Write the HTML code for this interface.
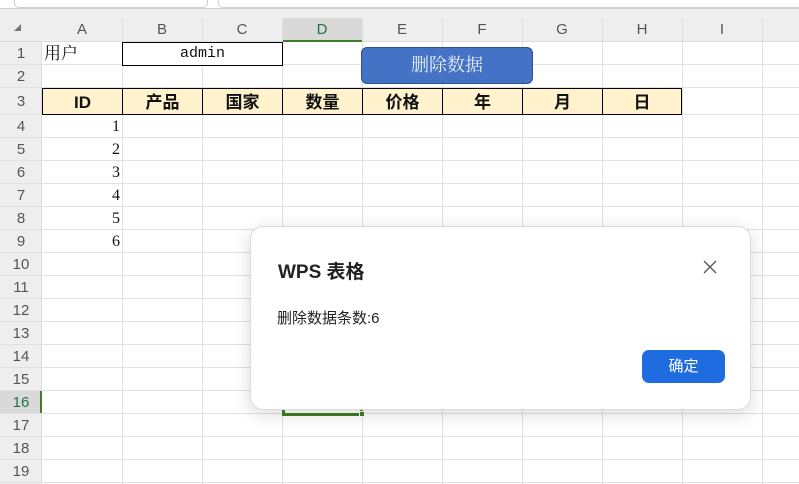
<!DOCTYPE html>
<html><head><meta charset="utf-8">
<style>
*{margin:0;padding:0;box-sizing:border-box}
body{width:799px;height:484px;overflow:hidden;background:#fff;position:relative;font-family:"Liberation Sans","Noto Sans CJK SC",sans-serif}
.a{position:absolute}
.vl{position:absolute;width:1px;background:#e1e1e1}
.hl{position:absolute;height:1px;background:#e1e1e1}
.ch{position:absolute;top:18px;height:24px;line-height:24px;text-align:center;font-size:15px;color:#555}
.rh{position:absolute;left:0;width:42px;text-align:center;font-size:15px;color:#555}
.hd{position:absolute;top:88px;height:27px;line-height:27px;text-align:center;font-weight:bold;font-size:17px;color:#111;background:#fff2cc;border:1px solid #000;margin-left:-1px}
.num{position:absolute;left:42px;width:78px;text-align:right;font-family:"Liberation Serif","Noto Serif CJK SC",serif;font-size:16px;color:#111}
</style></head><body>
<div class="a" style="left:0;top:0;width:799px;height:18px;background:#f0f0f0"></div>
<div class="a" style="left:0;top:0;width:799px;height:9px;background:#fff;border-bottom:1px solid #d0d0d0"></div>
<div class="a" style="left:14px;top:-6px;width:194px;height:14px;background:#fff;border:1px solid #cfcfcf;border-radius:5px"></div>
<div class="a" style="left:218px;top:-6px;width:600px;height:14px;background:#fff;border:1px solid #cfcfcf;border-radius:5px"></div>
<div class="a" style="left:0;top:18px;width:799px;height:24px;background:#eeeeee;border-bottom:1px solid #dcdcdc"></div>
<div class="a" style="left:0;top:42px;width:42px;height:442px;background:#eeeeee;border-right:1px solid #dcdcdc"></div>
<div class="a" style="left:282px;top:18px;width:80px;height:24px;background:#d9d9d9;border-bottom:2px solid #3e7e26"></div>
<div class="a" style="left:0;top:391px;width:42px;height:23px;background:#d9d9d9;border-right:2px solid #3e7e26"></div>
<div class="a" style="left:14px;top:24px;width:0;height:0;border-left:7px solid transparent;border-bottom:7px solid #777"></div>
<div id="g"></div>
<div class="a" style="left:44px;top:43px;font-family:'Liberation Serif','Noto Serif CJK SC',serif;font-size:17px;line-height:22px;color:#111">用户</div>
<div class="a" style="left:122px;top:42px;width:161px;height:24px;border:1px solid #000;background:#fff;text-align:center;font-family:'Liberation Mono',monospace;font-size:15px;line-height:22px;color:#111">admin</div>
<div class="hd" style="left:43px;width:81px">ID</div>
<div class="hd" style="left:123px;width:81px">产品</div>
<div class="hd" style="left:203px;width:81px">国家</div>
<div class="hd" style="left:283px;width:81px">数量</div>
<div class="hd" style="left:363px;width:81px">价格</div>
<div class="hd" style="left:443px;width:81px">年</div>
<div class="hd" style="left:523px;width:81px">月</div>
<div class="hd" style="left:603px;width:80px">日</div>
<div class="a" style="left:361px;top:47px;width:172px;height:37px;background:#4472c4;border:1px solid #2f528f;border-radius:6px;color:#e8eefc;text-align:center;line-height:34px;font-family:'Liberation Serif','Noto Serif CJK SC',serif;font-size:18px">删除数据</div>
<div class="a" style="left:282px;top:390px;width:81px;height:26px;border:3px solid #3e7e26"></div>
<div class="a" style="left:359px;top:411px;width:6px;height:6px;background:#3e7e26;border:1px solid #fff"></div>
<div class="a" style="left:250px;top:226px;width:501px;height:184px;background:#fff;border-radius:13px;border:1px solid #dcdcdc;box-shadow:0 4px 18px rgba(0,0,0,0.15)">
 <div class="a" style="left:27px;top:30px;font-size:19px;font-weight:bold;color:#222">WPS 表格</div>
 <svg class="a" style="left:452px;top:33px" width="14" height="14" viewBox="0 0 14 14"><path d="M1 1L13 13M13 1L1 13" stroke="#555" stroke-width="1.3"/></svg>
 <div class="a" style="left:26px;top:80px;font-size:15px;color:#222">删除数据条数:6</div>
 <div class="a" style="left:391px;top:123px;width:83px;height:33px;background:#1f6be0;border-radius:7px;color:#fff;font-size:15px;text-align:center;line-height:33px">确定</div>
</div>
<script>
var g=document.getElementById('g'),h='';
var cols=['A','B','C','D','E','F','G','H','I'];
for(var i=0;i<10;i++){var x=42+i*80;h+='<div class="vl" style="left:'+(x+80)+'px;top:18px;height:466px"></div>';}
for(i=0;i<9;i++){h+='<div class="ch" style="left:'+(42+i*80)+'px;width:80px;'+(i==3?'color:#217346':'')+'">'+cols[i]+'</div>';}
var ys=[42,65,88,115];for(i=4;i<=19;i++)ys.push(115+(i-3)*23);
for(i=0;i<19;i++){var t=ys[i],b=ys[i+1];h+='<div class="hl" style="left:0;top:'+(b-1)+'px;width:799px"></div>';
h+='<div class="rh" style="top:'+t+'px;height:'+(b-t)+'px;line-height:'+(b-t)+'px;'+(i==15?'color:#217346':'')+'">'+(i+1)+'</div>';}
for(i=0;i<6;i++){h+='<div class="num" style="top:'+(115+i*23)+'px;line-height:23px">'+(i+1)+'</div>';}
g.innerHTML=h;
</script>
</body></html>
